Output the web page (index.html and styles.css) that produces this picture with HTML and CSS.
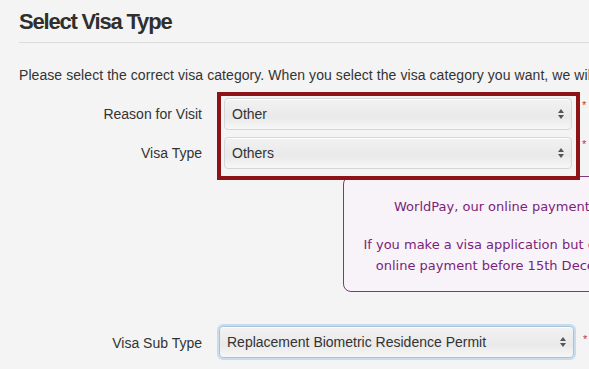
FILE: index.html
```html
<!DOCTYPE html>
<html lang="en">
<head>
  <meta charset="UTF-8">
  <meta name="viewport" content="width=device-width, initial-scale=1.0">
  <title>Select Visa Type</title>
  <link rel="stylesheet" href="styles.css">
</head>
<body>
  <div class="page">
    <h1>Select Visa Type</h1>
    <p class="intro">Please select the correct visa category. When you select the visa category you want, we will show you the documents you need.</p>

    <div class="form-block">
      <div class="labels">
        <label>Reason for Visit</label>
        <label>Visa Type</label>
      </div>
      <div class="highlight">
        <div class="select">
          <span>Other</span>
          <svg width="8" height="12" viewBox="0 0 8 12"><path d="M4 1 L7 5 L1 5 Z M4 11 L7 7 L1 7 Z" fill="#555"/></svg>
        </div>
        <div class="select">
          <span>Others</span>
          <svg width="8" height="12" viewBox="0 0 8 12"><path d="M4 1 L7 5 L1 5 Z M4 11 L7 7 L1 7 Z" fill="#555"/></svg>
        </div>
      </div>
      <div class="stars">
        <span>*</span>
        <span>*</span>
      </div>
    </div>

    <div class="notice">
      <p>WorldPay, our online payment service is new.</p>
      <p>If you make a visa application but do not complete the<br>online payment before 15th December, you will be</p>
    </div>

    <div class="form-row">
      <label>Visa Sub Type</label>
      <div class="select focused">
        <span>Replacement Biometric Residence Permit</span>
        <svg width="8" height="12" viewBox="0 0 8 12"><path d="M4 1 L7 5 L1 5 Z M4 11 L7 7 L1 7 Z" fill="#555"/></svg>
      </div>
      <span class="star">*</span>
    </div>
  </div>
</body>
</html>
```

FILE: styles.css
```css
body {
  margin: 0;
  background: #f4f4f4;
  font-family: "Liberation Sans", Arial, sans-serif;
  color: #333;
  overflow: hidden;
}
.page {
  padding-left: 19px;
  width: 700px;
}
h1 {
  font-size: 22px;
  font-weight: bold;
  letter-spacing: -1.2px;
  margin: 0;
  padding: 9px 0 8px;
  line-height: 25px;
  border-bottom: 1px solid #dcdcdc;
  color: #2f2f2f;
}
.intro {
  font-size: 14px;
  letter-spacing: 0.07px;
  margin: 23px 0 0;
  line-height: 18px;
  white-space: nowrap;
}
.form-block {
  display: flex;
  margin-top: 8px;
}
.labels {
  width: 183px;
  display: flex;
  flex-direction: column;
  gap: 7px;
  padding-top: 6px;
  text-align: right;
}
.labels label, .form-row label {
  font-size: 14px;
  line-height: 32px;
  height: 32px;
}
.highlight {
  margin-left: 15px;
  border: 4px solid #8e1316;
  padding: 2px 4px 7px 3px;
  display: flex;
  flex-direction: column;
  gap: 7px;
  position: relative;
  z-index: 1;
}
.select {
  width: 348px;
  height: 32px;
  box-sizing: border-box;
  border: 1px solid #d6d6d6;
  border-radius: 4px;
  background: linear-gradient(#f2f2f2, #e9e9e9 60%, #f7f7f7);
  display: flex;
  align-items: center;
  justify-content: space-between;
  padding: 0 6px 0 7px;
  font-size: 14px;
  color: #333;
  box-shadow: inset 0 1px 0 #fff;
}
.stars {
  display: flex;
  flex-direction: column;
  gap: 7px;
  padding-top: 4px;
  margin-left: 2px;
}
.stars span, .star {
  color: #c0392b;
  font-size: 11px;
  height: 32px;
  line-height: 18px;
}
.notice {
  margin: -4px 0 0 324px;
  width: 397px;
  height: 116px;
  box-sizing: border-box;
  border: 1px solid #7d3a7d;
  border-radius: 8px;
  background: #f8f3f8;
  font-family: "DejaVu Sans", Verdana, sans-serif;
  font-size: 13px;
  color: #7a1f7a;
  text-align: center;
  white-space: nowrap;
  padding-top: 19px;
}
.notice p {
  margin: 0 0 17px;
  line-height: 21px;
}
.form-row {
  display: flex;
  align-items: flex-start;
  margin-top: 34px;
}
.form-row label {
  width: 183px;
  text-align: right;
  line-height: 34px;
}
.form-row .select {
  margin-left: 17px;
  width: 355px;
}
.select.focused {
  border: 1px solid #a9c3dd;
  box-shadow: 0 0 0 2px #c8dcee, inset 0 1px 0 #fff;
}
.form-row .star {
  margin-left: 9px;
  margin-top: 4px;
}
```
